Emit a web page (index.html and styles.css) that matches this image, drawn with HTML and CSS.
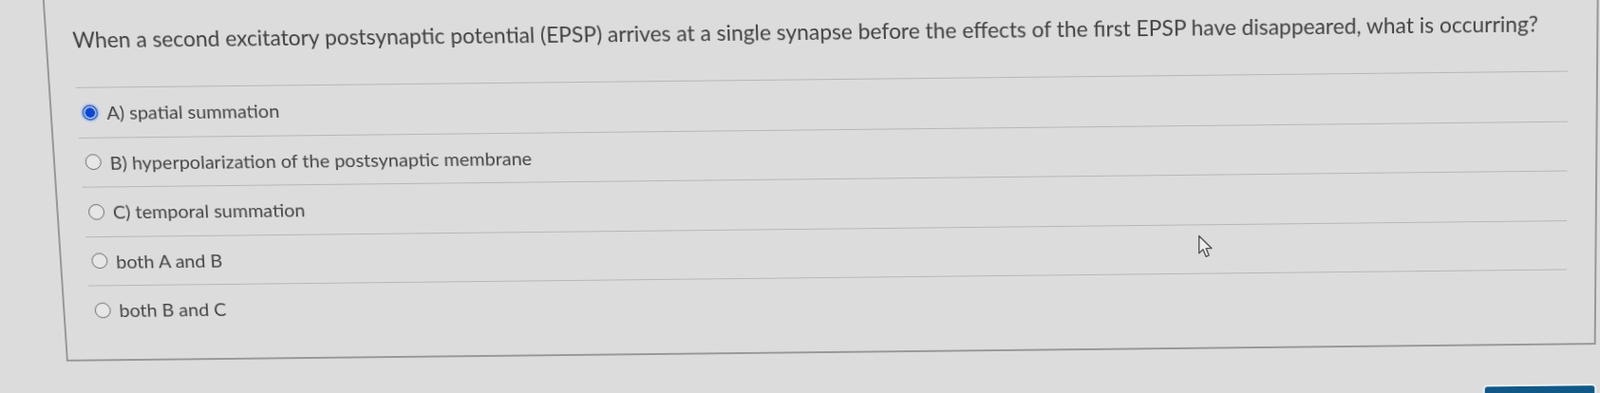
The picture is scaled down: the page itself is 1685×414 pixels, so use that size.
FILE: index.html
```html
<!DOCTYPE html>
<html lang="en">
<head>
<meta charset="utf-8">
<title>Question</title>
<link rel="stylesheet" href="styles.css">
</head>
<body>
<div class="screen">
  <div class="card">
    <p class="question">When a second excitatory postsynaptic potential (EPSP) arrives at a single synapse before the effects of the first EPSP have disappeared, what is occurring?</p>
    <ul class="options">
      <li class="option"><span class="radio checked"></span><span class="label">A) spatial summation</span></li>
      <li class="option"><span class="radio"></span><span class="label">B) hyperpolarization of the postsynaptic membrane</span></li>
      <li class="option"><span class="radio"></span><span class="label">C) temporal summation</span></li>
      <li class="option"><span class="radio"></span><span class="label">both A and B</span></li>
      <li class="option"><span class="radio"></span><span class="label">both B and C</span></li>
    </ul>
  </div>
  <div class="footer"><span class="btn"></span></div>
</div>
<svg class="cursor" width="19" height="27" viewBox="0 0 18 26">
  <path d="M1.5 1.5 L1.5 19 L5.6 15.2 L8.6 22.4 L11.6 21.1 L8.7 14.1 L14.3 14.1 Z" fill="#ececec" stroke="#5a5a5a" stroke-width="1.4" stroke-linejoin="round"/>
</svg>
</body>
</html>
```

FILE: styles.css
```css
html, body {
  margin: 0;
  padding: 0;
  overflow: hidden;
  background: #dcdcdc;
}

body {
  width: 1685px;
  height: 414px;
  position: relative;
  font-family: Lato, "Open Sans", sans-serif;
  color: #474747;
}

.screen {
  width: 1685px;
  transform-origin: 1260px 0;
  transform: rotate(-0.63deg) perspective(2000px) rotateX(-5.16deg);
}

.card {
  margin: -40px 0 0 43px;
  width: 1641px;
  box-sizing: border-box;
  border: 2px solid #979797;
  padding: 53px 30px 27px 27px;
}

.question {
  margin: 0 0 37px;
  font-size: 22.85px;
  line-height: 28px;
  white-space: nowrap;
  color: #414141;
}

.options {
  list-style: none;
  margin: 0;
  padding: 0;
}

.option {
  height: 53.5px;
  box-sizing: border-box;
  border-top: 1px solid #b6b6b6;
  display: flex;
  align-items: center;
  gap: 9px;
  padding-left: 5px;
  font-size: 20px;
  color: #444444;
}

.radio {
  flex: none;
  width: 17px;
  height: 17px;
  box-sizing: border-box;
  border-radius: 50%;
  border: 1.7px solid #666666;
  background: #e6e6e6;
}

.radio.checked {
  border: 2px solid #3f6dc4;
  background: radial-gradient(circle, #0c47cf 0 5px, #e6ecf6 5.6px);
  box-shadow: 0 0 0 2px #c2cfe6;
}

.footer {
  display: flex;
  justify-content: flex-end;
  margin-top: 43px;
}

.btn {
  width: 122px;
  height: 40px;
  box-sizing: border-box;
  border-radius: 5px;
  background: #0f5888;
  border: 2px solid #eef2f5;
}

.cursor {
  position: absolute;
  left: 1261px;
  top: 247px;
}
```
